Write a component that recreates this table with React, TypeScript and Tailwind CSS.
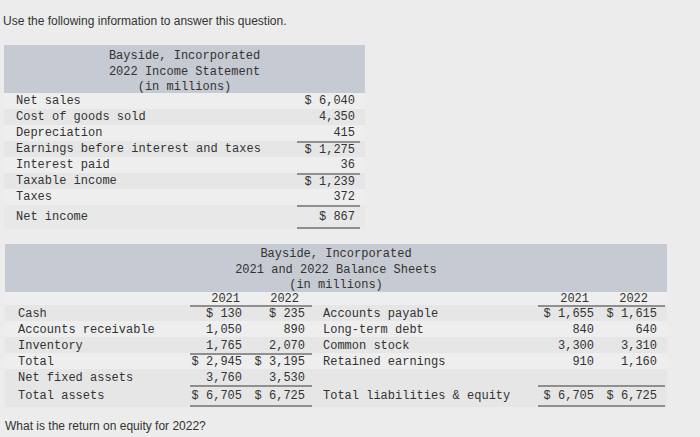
import React from "react";

const mono = "font-['Liberation_Mono',monospace] text-[12px] text-[#333]";
const line = "border-[#8f8f8f]";

type IncomeRow = { label: string; value: string; top?: boolean };

const income: IncomeRow[] = [
  { label: "Net sales", value: "$ 6,040" },
  { label: "Cost of goods sold", value: "4,350" },
  { label: "Depreciation", value: "415" },
  { label: "Earnings before interest and taxes", value: "$ 1,275", top: true },
  { label: "Interest paid", value: "36" },
  { label: "Taxable income", value: "$ 1,239", top: true },
  { label: "Taxes", value: "372" },
];

type BalanceRow = {
  a: string;
  a1: string;
  a2: string;
  l: string;
  l1: string;
  l2: string;
  topA?: boolean;
  topL?: boolean;
};

const balance: BalanceRow[] = [
  { a: "Cash", a1: "$ 130", a2: "$ 235", l: "Accounts payable", l1: "$ 1,655", l2: "$ 1,615", topA: true, topL: true },
  { a: "Accounts receivable", a1: "1,050", a2: "890", l: "Long-term debt", l1: "840", l2: "640" },
  { a: "Inventory", a1: "1,765", a2: "2,070", l: "Common stock", l1: "3,300", l2: "3,310" },
  { a: "Total", a1: "$ 2,945", a2: "$ 3,195", l: "Retained earnings", l1: "910", l2: "1,160", topA: true },
  { a: "Net fixed assets", a1: "3,760", a2: "3,530", l: "", l1: "", l2: "" },
];

function IncomeStatement() {
  return (
    <div className={`ml-[4px] w-[361px] ${mono}`}>
      <div className="flex h-[48px] flex-col items-center overflow-hidden bg-[#c6cad2] pt-[4px] leading-[15.5px]">
        <span>Bayside, Incorporated</span>
        <span>2022 Income Statement</span>
        <span>(in millions)</span>
      </div>
      {income.map((r, i) => (
        <div
          key={r.label}
          className={`flex h-[16px] items-center leading-[16px] ${i % 2 ? "bg-[#e6e6e6]" : "bg-[#eeeeee]"}`}
        >
          <span className="flex-1 pl-[12px]">{r.label}</span>
          <span
            className={`mr-[5px] h-[16px] w-[63px] pr-[5px] text-right ${r.top ? `border-t-2 ${line} leading-[13px] pt-[1px]` : ""}`}
          >
            {r.value}
          </span>
        </div>
      ))}
      <div className="flex h-[24px] items-stretch bg-[#e8e8e8]">
        <span className="flex flex-1 items-center pl-[12px]">Net income</span>
        <span className={`mr-[5px] flex w-[63px] items-center justify-end border-y-2 ${line} pr-[5px]`}>$ 867</span>
      </div>
    </div>
  );
}

function BalanceSheet() {
  const grid = "grid grid-cols-[185px_60px_62px_226px_62px_65px_1fr]";
  return (
    <div className={`ml-[5px] w-[662px] ${mono}`}>
      <div className="flex h-[48px] flex-col items-center overflow-hidden bg-[#c6cad2] pt-[3px] leading-[15.5px]">
        <span>Bayside, Incorporated</span>
        <span>2021 and 2022 Balance Sheets</span>
        <span>(in millions)</span>
      </div>
      <div className={`${grid} h-[13px] items-end bg-[#eeeeee] leading-[12px]`}>
        <span />
        <span className="pr-[10px] text-right">2021</span>
        <span className="pr-[13px] text-right">2022</span>
        <span />
        <span className="pr-[11px] text-right">2021</span>
        <span className="pr-[17px] text-right">2022</span>
        <span />
      </div>
      {balance.map((r, i) => (
        <div
          key={r.a}
          className={`${grid} h-[16px] leading-[14px] ${i % 2 ? "bg-[#eeeeee]" : "bg-[#e6e6e6]"}`}
        >
          <span className="pl-[13px] pt-[2px]">{r.a}</span>
          <span className={`pr-[8px] text-right ${r.topA ? `border-t-2 ${line}` : "pt-[2px]"}`}>{r.a1}</span>
          <span className={`pr-[7px] text-right ${r.topA ? `border-t-2 ${line}` : "pt-[2px]"}`}>{r.a2}</span>
          <span className="pl-[11px] pt-[2px]">{r.l}</span>
          <span className={`pr-[6px] text-right ${r.topL ? `border-t-2 ${line}` : "pt-[2px]"}`}>{r.l1}</span>
          <span className={`pr-[8px] text-right ${r.topL ? `border-t-2 ${line}` : "pt-[2px]"}`}>{r.l2}</span>
          <span />
        </div>
      ))}
      <div className={`${grid} h-[22px] bg-[#e6e6e6]`}>
        <span className="flex items-center pl-[13px]">Total assets</span>
        <span className={`flex items-center justify-end border-y-2 ${line} pr-[8px]`}>$ 6,705</span>
        <span className={`flex items-center justify-end border-y-2 ${line} pr-[7px]`}>$ 6,725</span>
        <span className="flex items-center pl-[11px]">Total liabilities &amp; equity</span>
        <span className={`flex items-center justify-end border-y-2 ${line} pr-[6px]`}>$ 6,705</span>
        <span className={`flex items-center justify-end border-y-2 ${line} pr-[8px]`}>$ 6,725</span>
        <span />
      </div>
    </div>
  );
}

export default function App() {
  return (
    <div className="h-[437px] w-[700px] overflow-hidden bg-[#ececec] font-['Liberation_Sans',sans-serif] text-[12px] text-[#333]">
      <p className="pl-[3px] pt-[14px] leading-[14px]">Use the following information to answer this question.</p>
      <div className="mt-[17px]">
        <IncomeStatement />
      </div>
      <div className="mt-[15px]">
        <BalanceSheet />
      </div>
      <p className="pl-[5px] pt-[12px] leading-[14px]">What is the return on equity for 2022?</p>
    </div>
  );
}
